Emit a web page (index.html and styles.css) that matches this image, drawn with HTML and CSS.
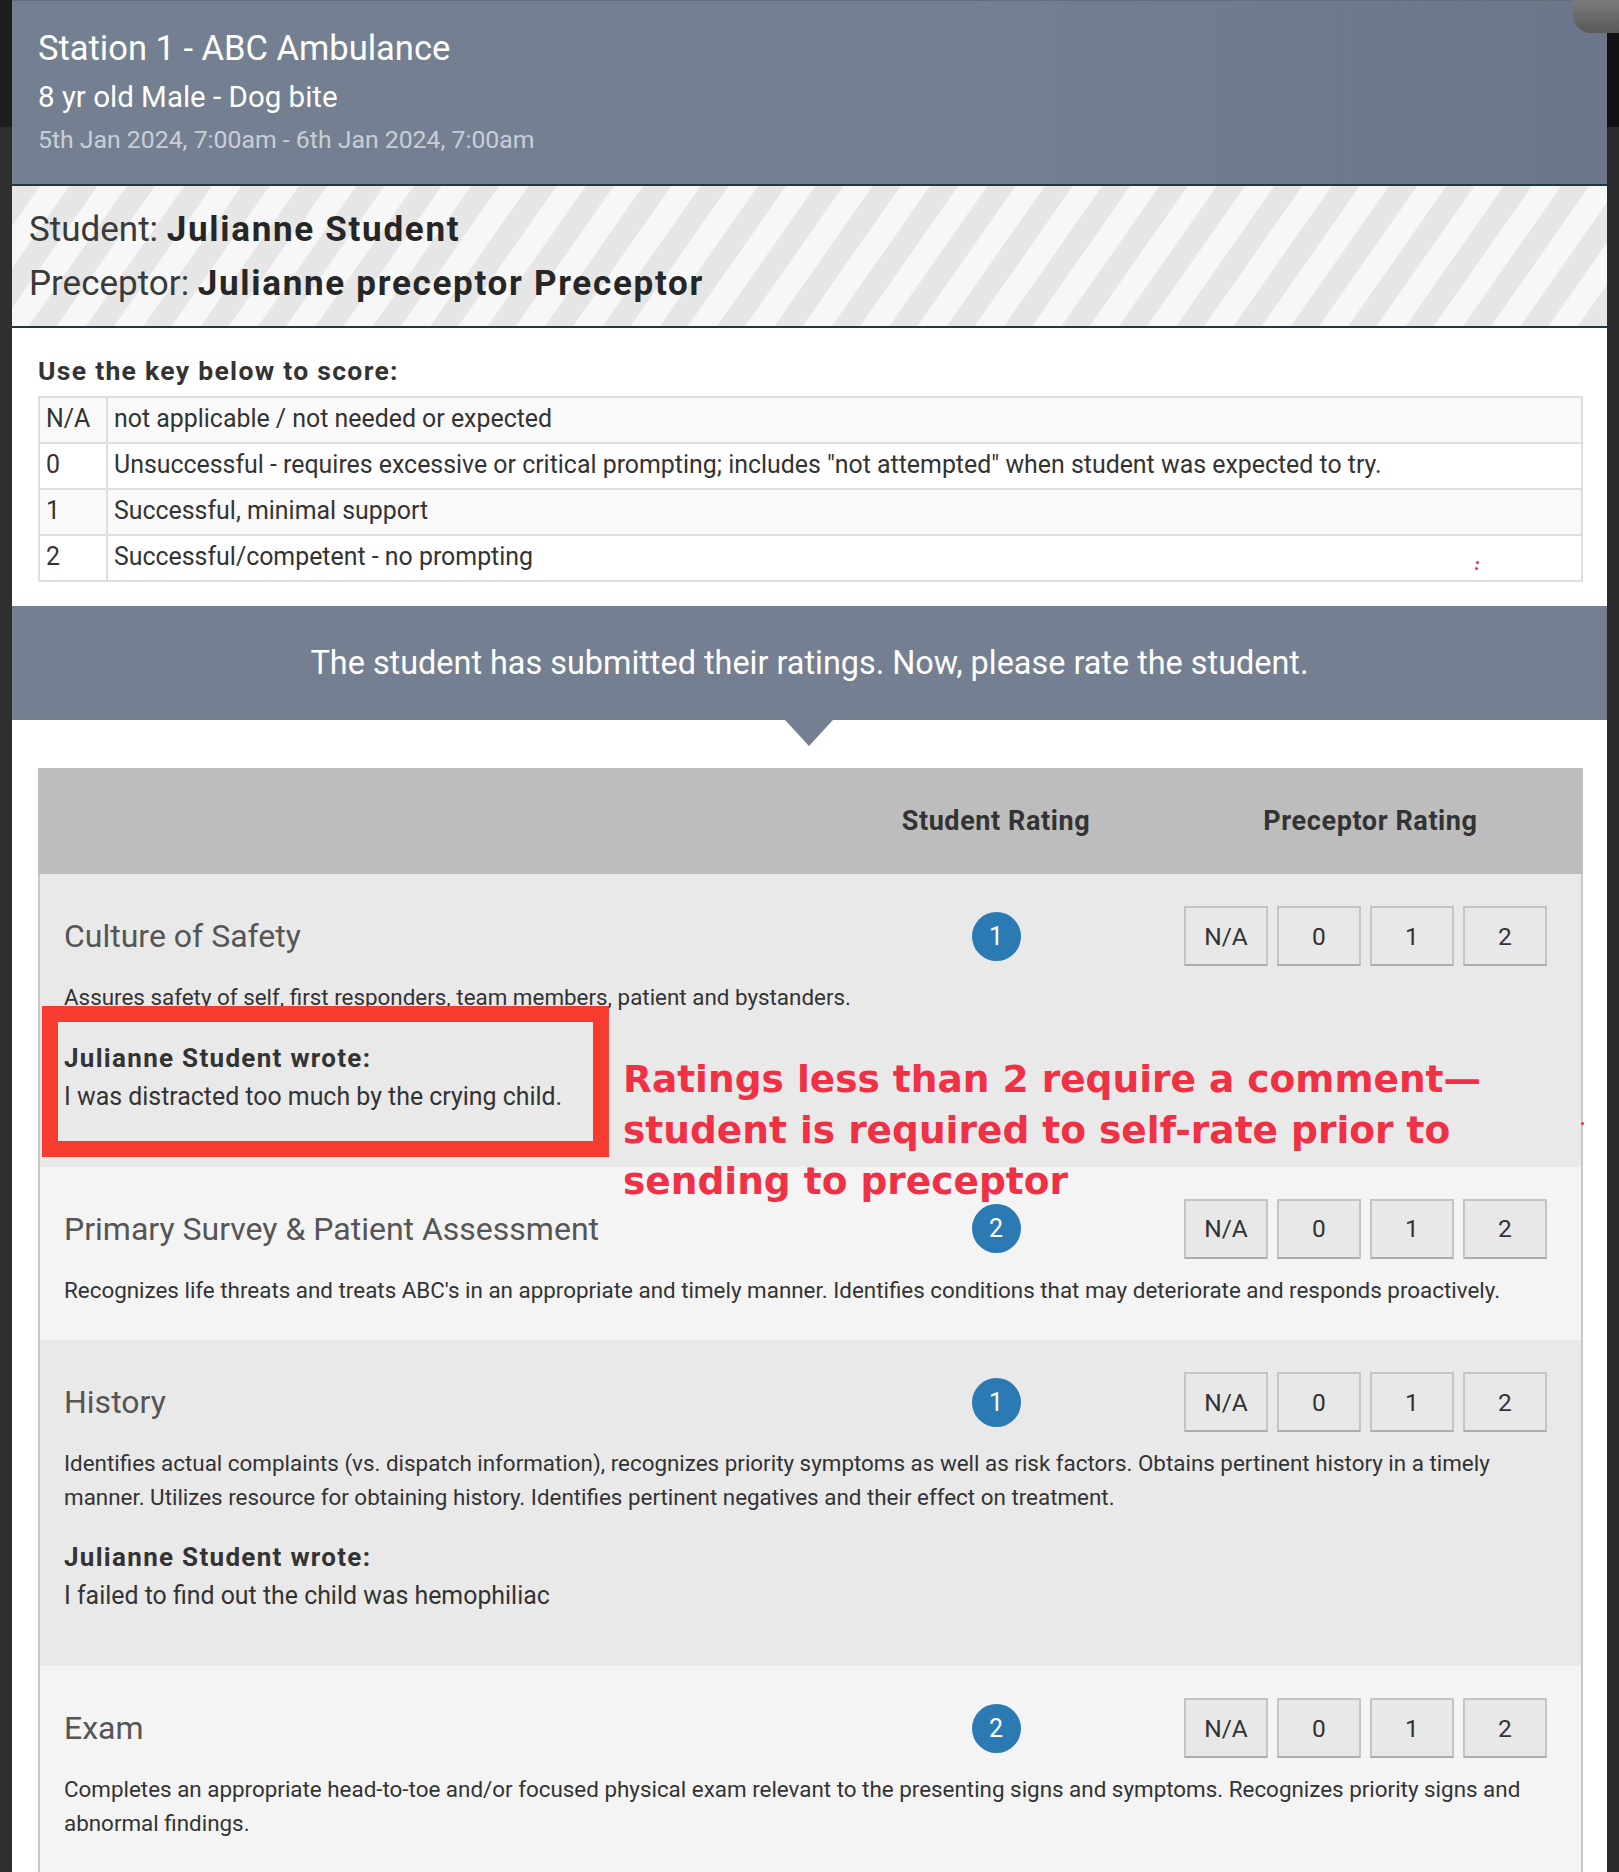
FILE: index.html
```html
<!DOCTYPE html>
<html lang="en">
<head>
<meta charset="utf-8">
<title>Station 1 - ABC Ambulance</title>
<link rel="stylesheet" href="styles.css">
</head>
<body>
<div class="page">
  <div class="strip strip-left"></div>
  <main class="panel">
    <header class="station">
      <h1 class="station-title">Station 1 - ABC Ambulance</h1>
      <div class="station-patient">8 yr old Male - Dog bite</div>
      <div class="station-date">5th Jan 2024, 7:00am - 6th Jan 2024, 7:00am</div>
    </header>

    <section class="people">
      <div class="person">Student: <strong>Julianne Student</strong></div>
      <div class="person">Preceptor: <strong>Julianne preceptor Preceptor</strong></div>
    </section>

    <section class="key">
      <h2 class="key-title">Use the key below to score:</h2>
      <table class="key-table">
        <tr><td class="key-code">N/A</td><td>not applicable / not needed or expected</td></tr>
        <tr><td class="key-code">0</td><td>Unsuccessful - requires excessive or critical prompting; includes "not attempted" when student was expected to try.</td></tr>
        <tr><td class="key-code">1</td><td>Successful, minimal support</td></tr>
        <tr><td class="key-code">2</td><td>Successful/competent - no prompting</td></tr>
      </table>
    </section>

    <div class="banner">The student has submitted their ratings. Now, please rate the student.</div>

    <section class="ratings">
      <div class="ratings-head">
        <div></div>
        <div class="col-head">Student Rating</div>
        <div class="col-head">Preceptor Rating</div>
      </div>

      <div class="item item-dark">
        <div class="item-top">
          <div class="item-title">Culture of Safety</div>
          <div class="student-col"><span class="badge">1</span></div>
          <div class="choices"><button class="choice">N/A</button><button class="choice">0</button><button class="choice">1</button><button class="choice">2</button></div>
        </div>
        <p class="item-desc">Assures safety of self, first responders, team members, patient and bystanders.</p>
        <div class="comment">
          <div class="comment-label">Julianne Student wrote:</div>
          <div class="comment-text">I was distracted too much by the crying child.</div>
        </div>
      </div>

      <div class="item item-light">
        <div class="item-top">
          <div class="item-title">Primary Survey &amp; Patient Assessment</div>
          <div class="student-col"><span class="badge">2</span></div>
          <div class="choices"><button class="choice">N/A</button><button class="choice">0</button><button class="choice">1</button><button class="choice">2</button></div>
        </div>
        <p class="item-desc">Recognizes life threats and treats ABC's in an appropriate and timely manner. Identifies conditions that may deteriorate and responds proactively.</p>
      </div>

      <div class="item item-dark">
        <div class="item-top">
          <div class="item-title">History</div>
          <div class="student-col"><span class="badge">1</span></div>
          <div class="choices"><button class="choice">N/A</button><button class="choice">0</button><button class="choice">1</button><button class="choice">2</button></div>
        </div>
        <p class="item-desc">Identifies actual complaints (vs. dispatch information), recognizes priority symptoms as well as risk factors. Obtains pertinent history in a timely manner. Utilizes resource for obtaining history. Identifies pertinent negatives and their effect on treatment.</p>
        <div class="comment">
          <div class="comment-label">Julianne Student wrote:</div>
          <div class="comment-text">I failed to find out the child was hemophiliac</div>
        </div>
      </div>

      <div class="item item-light">
        <div class="item-top">
          <div class="item-title">Exam</div>
          <div class="student-col"><span class="badge">2</span></div>
          <div class="choices"><button class="choice">N/A</button><button class="choice">0</button><button class="choice">1</button><button class="choice">2</button></div>
        </div>
        <p class="item-desc">Completes an appropriate head-to-toe and/or focused physical exam relevant to the presenting signs and symptoms. Recognizes priority signs and abnormal findings.</p>
      </div>
    </section>
  </main>
  <div class="strip strip-right"></div>

  <div class="close-tab"></div>
  <div class="callout-box"></div>
  <div class="callout-text">Ratings less than 2 require a comment—<br>student is required to self-rate prior to<br>sending to preceptor</div>
  <div class="red-mark red-mark-key"></div>
  <div class="red-mark red-mark-edge"></div>
</div>
</body>
</html>
```

FILE: styles.css
```css
html, body {
  margin: 0;
  padding: 0;
}

body {
  background: #2f2f2f;
  font-family: Roboto, "Liberation Sans", sans-serif;
  color: #333;
}

.page {
  position: relative;
  display: flex;
  width: 1619px;
}

.strip {
  flex: none;
  width: 12px;
}

.strip-left {
  background: linear-gradient(#1e1e1e 0 127px, #2f2f2f 127px);
}

.strip-right {
  background: linear-gradient(#111114 0 127px, #2b2b2b 127px);
}

.panel {
  flex: none;
  width: 1595px;
  background: #fff;
}

/* ---------- station header ---------- */
.station {
  background: linear-gradient(90deg, #748091 0%, #748091 58%, #6c7589 100%);
  border-top: 1px solid #626d7e;
  border-bottom: 2px solid #1e3946;
  padding: 24px 26px 28px;
  color: #fff;
}

.station-title {
  margin: 0 0 4px;
  font-size: 34.5px;
  font-weight: 400;
  line-height: 46px;
}

.station-patient {
  font-size: 29.5px;
  line-height: 44px;
}

.station-date {
  margin-top: 5px;
  font-size: 24.8px;
  line-height: 32px;
  color: #c9ced6;
}

/* ---------- people ---------- */
.people {
  background: repeating-linear-gradient(125deg, #e6e6e6 0 23px, #f7f7f7 23px 47px);
  border-bottom: 2px solid #1e3946;
  padding: 17px 17px 15px;
  font-size: 35px;
  line-height: 54px;
  color: #3a3a3a;
}

.person strong {
  font-weight: 700;
  letter-spacing: 1.7px;
  color: #262626;
}

/* ---------- key ---------- */
.key {
  padding: 25px 24px 24px 26px;
}

.key-title {
  margin: 0 0 7px;
  font-size: 26.5px;
  font-weight: 700;
  letter-spacing: 1.3px;
  line-height: 36px;
  color: #333;
}

.key-table {
  width: 100%;
  border-collapse: collapse;
  border: 2px solid #dedede;
  font-size: 24.9px;
  color: #333;
}

.key-table td {
  border: 2px solid #dedede;
  height: 41px;
  padding: 0 6px 3px;
  line-height: 28px;
}

.key-table tr:nth-child(odd) {
  background: #f9f9f9;
}

.key-table .key-code {
  width: 54px;
}

/* ---------- banner ---------- */
.banner {
  position: relative;
  height: 114px;
  display: flex;
  align-items: center;
  justify-content: center;
  background: #748091;
  color: #fff;
  font-size: 32.4px;
}

.banner::after {
  content: "";
  position: absolute;
  left: 50%;
  top: 100%;
  margin-left: -25px;
  border-left: 24px solid transparent;
  border-right: 24px solid transparent;
  border-top: 26px solid #748091;
}

/* ---------- ratings ---------- */
.ratings {
  margin: 48px 24px 0 26px;
}

.ratings-head,
.item-top {
  display: grid;
  grid-template-columns: 1fr 200px 363px;
  column-gap: 88px;
  align-items: center;
}

.ratings-head {
  height: 106px;
  padding: 0 36px 0 26px;
  background: #bdbdbd;
}

.col-head {
  text-align: center;
  font-size: 27px;
  font-weight: 700;
  letter-spacing: 0.6px;
  color: #333;
}

.col-head:last-child {
  padding-left: 10px;
}

.item {
  border-left: 2px solid #c8c8c8;
  border-right: 2px solid #c8c8c8;
  padding: 32px 34px 33px 24px;
}

.item-dark {
  background: #e9e9e9;
}

.item-light {
  background: #f4f4f4;
}

.item-top {
  height: 60px;
}

.item-title {
  font-size: 32px;
  line-height: 40px;
  color: #555;
}

.student-col {
  display: flex;
  justify-content: center;
}

.badge {
  width: 49px;
  height: 49px;
  border-radius: 50%;
  background: #2b7ab4;
  color: #fff;
  font-size: 25px;
  display: flex;
  align-items: center;
  justify-content: center;
}

.choices {
  display: flex;
  gap: 9px;
}

.choice {
  width: 84px;
  height: 60px;
  padding: 0;
  border: 2px solid #c4c4c4;
  border-bottom-color: #adadad;
  background: #e8e8e8;
  font-family: Roboto, "Liberation Sans", sans-serif;
  font-size: 24.5px;
  color: #333;
}

.item-desc {
  margin: 15px 0 0;
  font-size: 22.4px;
  line-height: 33.5px;
  color: #333;
}

.comment {
  margin: 25px 0 19px;
}

.comment-label {
  font-size: 26px;
  font-weight: 700;
  letter-spacing: 1.3px;
  line-height: 36px;
  color: #333;
}

.comment-text {
  margin-top: 3px;
  font-size: 24.9px;
  line-height: 36px;
  color: #333;
}

/* ---------- overlays ---------- */
.close-tab {
  position: absolute;
  left: 1573px;
  top: 0;
  width: 46px;
  height: 33px;
  border-bottom-left-radius: 18px;
  background: linear-gradient(180deg, #7c7c7c, #585858);
}

.callout-box {
  position: absolute;
  left: 42px;
  top: 1006px;
  width: 567px;
  height: 151px;
  box-sizing: border-box;
  border: 16px solid #f63c30;
}

.callout-text {
  position: absolute;
  left: 623px;
  top: 1054px;
  font-family: "DejaVu Sans", sans-serif;
  font-weight: 700;
  font-size: 37.5px;
  line-height: 51px;
  color: #ef3045;
  white-space: nowrap;
}

.red-mark {
  position: absolute;
  width: 3px;
  height: 3px;
  border-radius: 50%;
  background: #e8303f;
}

.red-mark-key {
  left: 1476px;
  top: 561px;
  box-shadow: -1px 6px 0 #e8303f;
}

.red-mark-edge {
  left: 1581px;
  top: 1122px;
}
```
